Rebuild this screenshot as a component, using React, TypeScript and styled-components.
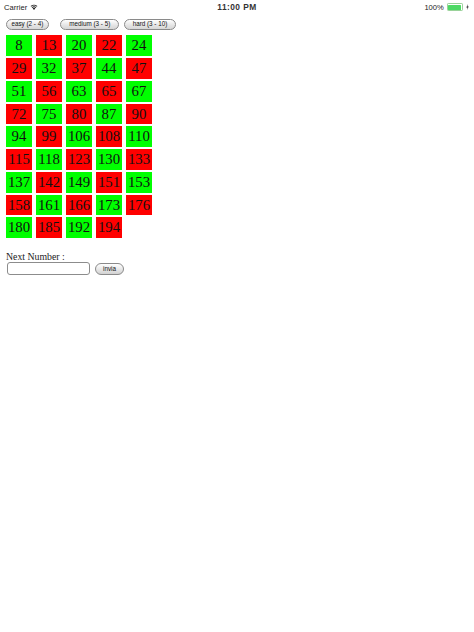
import React from "react";
import styled, { createGlobalStyle } from "styled-components";

const Global = createGlobalStyle`
  html, body { margin: 0; padding: 0; background: #fff; }
  body { width: 474px; height: 632px; overflow: hidden; }
`;

const StatusBar = styled.div`
  height: 14px;
  display: grid;
  grid-template-columns: 1fr auto 1fr;
  align-items: center;
  font-family: "Liberation Sans", Arial, sans-serif;
  font-size: 7.6px;
  color: #222;
  padding: 0 4px;
`;

const Left = styled.div`
  display: flex;
  align-items: center;
  gap: 3px;
`;

const Center = styled.div`
  font-weight: 700;
  font-size: 8.4px;
  letter-spacing: 0.45px;
  color: #333;
`;

const Right = styled.div`
  display: flex;
  justify-content: flex-end;
  align-items: center;
  gap: 3px;
  padding-right: 1px;
`;

const Battery = styled.div`
  width: 13px;
  height: 5px;
  border: 0.6px solid #9ad29a;
  border-radius: 1.2px;
  padding: 0.6px;
  display: flex;
`;

const BatteryFill = styled.div`
  flex: 1;
  background: #4cd964;
  border-radius: 0.6px;
`;

const Content = styled.div`
  padding-left: 6px;
  font-family: "Liberation Serif", "Times New Roman", serif;
`;

const ModeRow = styled.div`
  display: flex;
  align-items: center;
  margin-top: 4.7px;
  height: 11.5px;
`;

const ModeButton = styled.button<{ $after: number; $width: number }>`
  width: ${(p) => p.$width}px;
  height: 11.5px;
  padding: 0;
  margin: 0 ${(p) => p.$after}px 0 0;
  border: 0.8px solid #8a8a8a;
  border-radius: 6px;
  background: linear-gradient(#ffffff, #e4e4e4 60%, #d6d6d6);
  font-family: "Liberation Sans", Arial, sans-serif;
  font-size: 6.3px;
  color: #111;
  line-height: 1;
  display: flex;
  align-items: center;
  justify-content: center;
  box-sizing: border-box;
  white-space: nowrap;
`;

const Grid = styled.div`
  display: grid;
  grid-template-columns: repeat(5, 26px);
  column-gap: 4px;
  row-gap: 2px;
  margin-top: 5.3px;
`;

const Cell = styled.div<{ $green: boolean }>`
  height: 20.75px;
  line-height: 20.75px;
  font-size: 14.8px;
  color: #111;
  background: ${(p) => (p.$green ? "#00ff00" : "#ff0000")};
  white-space: nowrap;
  display: flex;
  justify-content: center;
`;

const Label = styled.div`
  font-size: 9.8px;
  color: #222;
  margin-top: 12.3px;
  line-height: 11.3px;
`;

const FormRow = styled.div`
  display: flex;
  align-items: center;
  margin-top: 0.6px;
  padding-left: 1px;
`;

const Input = styled.input`
  width: 83px;
  height: 12.7px;
  box-sizing: border-box;
  border: 0.8px solid #8c8c8c;
  border-radius: 3px;
  background: #fff;
  padding: 0;
  margin: 0 5px 0 0;
`;

const SendButton = styled.button`
  width: 29px;
  height: 12px;
  box-sizing: border-box;
  border: 0.8px solid #8a8a8a;
  border-radius: 6px;
  background: linear-gradient(#ffffff, #e4e4e4 60%, #d2d2d2);
  font-family: "Liberation Sans", Arial, sans-serif;
  font-size: 6.3px;
  color: #111;
  padding: 0;
  display: flex;
  align-items: center;
  justify-content: center;
`;

const numbers = [
  8, 13, 20, 22, 24, 29, 32, 37, 44, 47, 51, 56, 63, 65, 67, 72, 75, 80, 87, 90,
  94, 99, 106, 108, 110, 115, 118, 123, 130, 133, 137, 142, 149, 151, 153, 158,
  161, 166, 173, 176, 180, 185, 192, 194,
];

const modes = [
  { label: "easy (2 - 4)", width: 42.7, after: 11.6 },
  { label: "medium (3 - 5)", width: 59, after: 4.7 },
  { label: "hard (3 - 10)", width: 52, after: 0 },
];

const Wifi = () => (
  <svg width="8" height="6" viewBox="0 0 16 12">
    <path d="M8 12 L5.2 8.6 A4.4 4.4 0 0 1 10.8 8.6 Z" fill="#222" />
    <path d="M3.4 6.6 A7 7 0 0 1 12.6 6.6 L11.4 8 A5.2 5.2 0 0 0 4.6 8 Z" fill="#222" />
    <path d="M1.2 4.2 A10.4 10.4 0 0 1 14.8 4.2 L13.6 5.6 A8.6 8.6 0 0 0 2.4 5.6 Z" fill="#222" />
  </svg>
);

const Plug = () => (
  <svg width="3" height="6" viewBox="0 0 3 6">
    <path d="M2 0 L0.3 3.4 H1.5 L1 6 L2.7 2.6 H1.5 Z" fill="#222" />
  </svg>
);

export default function App() {
  return (
    <>
      <Global />
      <StatusBar>
        <Left>
          <span>Carrier</span>
          <Wifi />
        </Left>
        <Center>11:00 PM</Center>
        <Right>
          <span>100%</span>
          <Battery>
            <BatteryFill />
          </Battery>
          <Plug />
        </Right>
      </StatusBar>
      <Content>
        <ModeRow>
          {modes.map((m) => (
            <ModeButton key={m.label} $width={m.width} $after={m.after}>
              {m.label}
            </ModeButton>
          ))}
        </ModeRow>
        <Grid>
          {numbers.map((n, i) => (
            <Cell key={n} $green={i % 2 === 0}>
              {n}
            </Cell>
          ))}
        </Grid>
        <Label>Next Number :</Label>
        <FormRow>
          <Input type="text" />
          <SendButton>invia</SendButton>
        </FormRow>
      </Content>
    </>
  );
}
